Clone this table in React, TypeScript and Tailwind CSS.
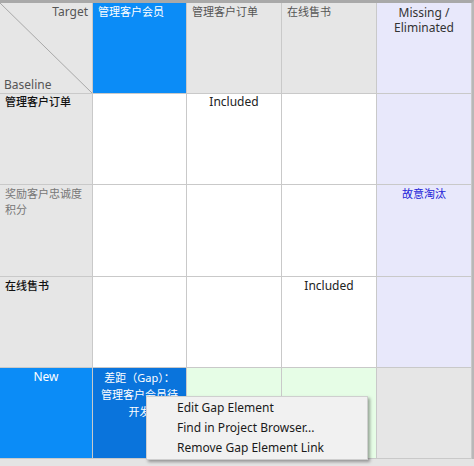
import React from "react";

const font = { fontFamily: '"Noto Sans", "Noto Sans CJK SC", sans-serif' };

export default function App() {
  return (
    <div className="relative w-[474px] h-[466px] overflow-hidden bg-[#e4e4e4]" style={font}>
      <div className="grid grid-cols-[92px_93px_94px_94px_94px] grid-rows-[90px_90px_91px_90px_90px] gap-px bg-[#c9c9c9] border-t-[3px] border-[#a9a9a9] border-r-2 border-r-[#b8b8b8] pr-px pb-px">
        {/* header row */}
        <div className="relative bg-[#e6e6e6]">
          <svg className="absolute inset-0" width="92" height="90">
            <line x1="0" y1="0" x2="92" y2="90" stroke="#a8a8a8" strokeWidth="1" />
          </svg>
          <div className="absolute right-[4px] top-[1px] text-[12px] leading-4 text-[#555]">Target</div>
          <div className="absolute left-[4px] bottom-[0px] text-[12px] leading-4 text-[#555]">Baseline</div>
        </div>
        <div className="bg-[#0b8cf7] px-[5px] pt-px text-[11px] leading-4 text-white">管理客户会员</div>
        <div className="bg-[#e6e6e6] px-[5px] pt-px text-[11px] leading-4 text-[#555]">管理客户订单</div>
        <div className="bg-[#e6e6e6] px-[5px] pt-px text-[11px] leading-4 text-[#555]">在线售书</div>
        <div className="bg-[#e8e8fb] pt-[2px] text-center text-[12px] leading-[15px] text-[#333]">
          Missing /<br />Eliminated
        </div>

        {/* row 1 */}
        <div className="bg-[#e6e6e6] px-[5px] text-[11px] leading-4 text-[#111] font-medium">管理客户订单</div>
        <div className="bg-white" />
        <div className="bg-white text-center text-[12px] leading-4 text-[#222]">Included</div>
        <div className="bg-white" />
        <div className="bg-[#e8e8fb]" />

        {/* row 2 */}
        <div className="bg-[#e6e6e6] px-[5px] pt-px text-[11px] leading-4 text-[#777]">奖励客户忠诚度积分</div>
        <div className="bg-white" />
        <div className="bg-white" />
        <div className="bg-white" />
        <div className="bg-[#e8e8fb] pt-px text-center text-[11px] leading-4 text-[#2424d8]">故意淘汰</div>

        {/* row 3 */}
        <div className="bg-[#e6e6e6] px-[5px] pt-px text-[11px] leading-4 text-[#111] font-medium">在线售书</div>
        <div className="bg-white" />
        <div className="bg-white" />
        <div className="bg-white pt-px text-center text-[12px] leading-4 text-[#222]">Included</div>
        <div className="bg-[#e8e8fb]" />

        {/* row 4 */}
        <div className="bg-[#0b8cf7] pt-px text-center text-[12px] leading-4 text-white">New</div>
        <div className="bg-[#0a74dc] px-[4px] pt-px text-center text-[11px] leading-[17px] text-white">
          差距（Gap）：<br />管理客户会员待<br />开发
        </div>
        <div className="bg-[#e6fde6]" />
        <div className="bg-[#e6fde6]" />
        <div className="bg-[#e6e6e6]" />
      </div>

      {/* context menu */}
      <div className="absolute left-[146px] top-[396px] w-[222px] bg-[#f1f1f1] border border-[#cfcfcf] py-[1px] shadow-[2px_2px_3px_rgba(0,0,0,0.35)]">
        <div className="h-5 pl-[30px] text-[12px] leading-5 text-[#1a1a1a]">Edit Gap Element</div>
        <div className="h-5 pl-[30px] text-[12px] leading-5 text-[#1a1a1a]">Find in Project Browser...</div>
        <div className="h-5 pl-[30px] text-[12px] leading-5 text-[#1a1a1a]">Remove Gap Element Link</div>
      </div>
    </div>
  );
}
